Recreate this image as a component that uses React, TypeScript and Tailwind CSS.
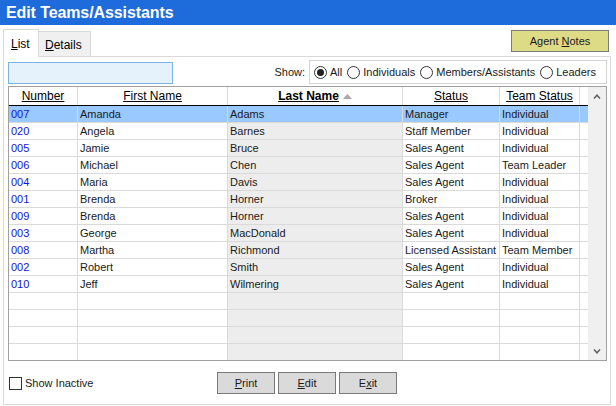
import React from 'react';

type Row = { num: string; first: string; last: string; status: string; team: string };

const rows: Row[] = [
  { num: '007', first: 'Amanda', last: 'Adams', status: 'Manager', team: 'Individual' },
  { num: '020', first: 'Angela', last: 'Barnes', status: 'Staff Member', team: 'Individual' },
  { num: '005', first: 'Jamie', last: 'Bruce', status: 'Sales Agent', team: 'Individual' },
  { num: '006', first: 'Michael', last: 'Chen', status: 'Sales Agent', team: 'Team Leader' },
  { num: '004', first: 'Maria', last: 'Davis', status: 'Sales Agent', team: 'Individual' },
  { num: '001', first: 'Brenda', last: 'Horner', status: 'Broker', team: 'Individual' },
  { num: '009', first: 'Brenda', last: 'Horner', status: 'Sales Agent', team: 'Individual' },
  { num: '003', first: 'George', last: 'MacDonald', status: 'Sales Agent', team: 'Individual' },
  { num: '008', first: 'Martha', last: 'Richmond', status: 'Licensed Assistant', team: 'Team Member' },
  { num: '002', first: 'Robert', last: 'Smith', status: 'Sales Agent', team: 'Individual' },
  { num: '010', first: 'Jeff', last: 'Wilmering', status: 'Sales Agent', team: 'Individual' },
];

const EMPTY_ROWS = 4;

const Radio = ({ label, checked }: { label: string; checked?: boolean }) => (
  <div className="flex items-center gap-[3px]">
    <span className="w-[13px] h-[13px] rounded-full border border-[#333] bg-white flex items-center justify-center">
      {checked && <span className="w-[7px] h-[7px] rounded-full bg-[#222]" />}
    </span>
    <span className="text-[11px] leading-none">{label}</span>
  </div>
);

const Btn = ({ children }: { children: React.ReactNode }) => (
  <button className="w-[58px] h-[22px] border border-[#7a7a7a] bg-[#dadada] text-[11px] leading-none text-[#1a1a1a]">
    {children}
  </button>
);

const cell = 'h-full flex items-center px-[2px] border-r border-[#dadada] whitespace-nowrap overflow-hidden';
const head = 'h-full flex items-center justify-center border-r border-[#dadada] text-[12px] text-black';

export default function App() {
  const total = rows.length + EMPTY_ROWS;

  return (
    <div className="w-[616px] h-[406px] bg-white overflow-hidden font-['Liberation_Sans',Arial,sans-serif] text-[#1a1a1a]">
      {/* Title bar */}
      <div className="h-[25px] bg-[#1e6bdc] flex items-center pl-[6px]">
        <span className="text-white font-bold text-[16px] leading-none tracking-[-0.1px]">Edit Teams/Assistants</span>
      </div>

      {/* Tabs + Agent Notes */}
      <div className="h-[31px] flex justify-between pl-[3px] pr-[7px]">
        <div className="flex items-end self-end -mb-px relative z-10">
          <div className="w-[36px] h-[28px] bg-white border-t border-l border-r border-[#d9d9d9] flex items-center pl-[7px] text-[12px] leading-none text-black">
            <span><span className="underline">L</span>ist</span>
          </div>
          <div className="w-[52px] h-[26px] bg-[#f0f0f0] border-t border-r border-b border-[#d9d9d9] flex items-center pl-[6px] pt-[2px] text-[12px] leading-none text-black">
            <span><span className="underline">D</span>etails</span>
          </div>
        </div>
        <button className="mt-[5px] w-[98px] h-[22px] border border-[#7a7a7a] bg-[#dedb87] text-[11px] leading-none text-[#1a1a1a]">
          Agent <span className="underline">N</span>otes
        </button>
      </div>

      {/* Tab panel */}
      <div className="ml-[3px] w-[608px] h-[349px] border border-[#d9d9d9] pl-[4px] pt-[3px]">
        <div className="w-[599px] h-[24px] flex justify-between items-start">
          <div className="mt-[2px] w-[165px] h-[22px] border border-[#7ab4e6] bg-[#e5f1fb]" />
          <div className="flex items-center h-full">
            <span className="text-[11px] leading-none mr-[4px]">Show:</span>
            <div className="w-[298px] h-[24px] border border-[#d4d4d4] flex items-center pl-[4px] gap-[5px]">
              <Radio label="All" checked />
              <Radio label="Individuals" />
              <Radio label="Members/Assistants" />
              <Radio label="Leaders" />
            </div>
          </div>
        </div>

        {/* Grid */}
        <div className="mt-[2px] w-[599px] h-[275px] border border-[#a0a0a0] flex">
          <div className="w-[579px] flex flex-col">
            <div className="h-[19px] flex border-b border-black bg-white">
              <div className={`${head} w-[69px]`}><span className="underline">Number</span></div>
              <div className={`${head} w-[150px]`}><span className="underline">First Name</span></div>
              <div className={`${head} w-[175px] gap-[4px]`}>
                <span className="underline font-bold">Last Name</span>
                <svg width="9" height="5" viewBox="0 0 9 5">
                  <polygon points="0,5 4.5,0 9,5" fill="#a8a8a8" />
                </svg>
              </div>
              <div className={`${head} w-[97px]`}><span className="underline">Status</span></div>
              <div className={`${head} w-[80px]`}><span className="underline">Team Status</span></div>
              <div className="w-[8px]" />
            </div>

            {Array.from({ length: total }).map((_, i) => {
              const r = rows[i];
              const sel = i === 0;
              const last = i === total - 1;
              return (
                <div
                  key={i}
                  className={`flex text-[11px] leading-none ${last ? 'h-[16px]' : 'h-[17px] border-b border-[#dadada]'} ${sel ? 'bg-[#99c9ff]' : 'bg-white'}`}
                >
                  <div className={`${cell} w-[69px] text-[#1212dd]`}>{r?.num}</div>
                  <div className={`${cell} w-[150px]`}>{r?.first}</div>
                  <div className={`${cell} w-[175px] ${sel ? '' : 'bg-[#ededed]'}`}>{r?.last}</div>
                  <div className={`${cell} w-[97px]`}>{r?.status}</div>
                  <div className={`${cell} w-[80px]`}>{r?.team}</div>
                  <div className="w-[8px]" />
                </div>
              );
            })}
          </div>

          {/* Scrollbar */}
          <div className="w-[18px] bg-[#f0f0f0] flex flex-col justify-between items-center pt-[7px] pb-[6px]">
            <svg width="8" height="5" viewBox="0 0 8 5">
              <path d="M1 4.5 L4 1.2 L7 4.5" fill="none" stroke="#606060" strokeWidth="1.5" />
            </svg>
            <svg width="8" height="5" viewBox="0 0 8 5">
              <path d="M1 0.5 L4 3.8 L7 0.5" fill="none" stroke="#606060" strokeWidth="1.5" />
            </svg>
          </div>
        </div>

        {/* Bottom row */}
        <div className="mt-[11px] h-[22px] flex items-center">
          <div className="ml-[1px] w-[208px] flex items-center">
            <span className="w-[13px] h-[13px] border border-[#333] bg-white" />
            <span className="ml-[3px] text-[11px] leading-none">Show Inactive</span>
          </div>
          <div className="flex gap-[3px]">
            <Btn><span className="underline">P</span>rint</Btn>
            <Btn><span className="underline">E</span>dit</Btn>
            <Btn>E<span className="underline">x</span>it</Btn>
          </div>
        </div>
      </div>
    </div>
  );
}
